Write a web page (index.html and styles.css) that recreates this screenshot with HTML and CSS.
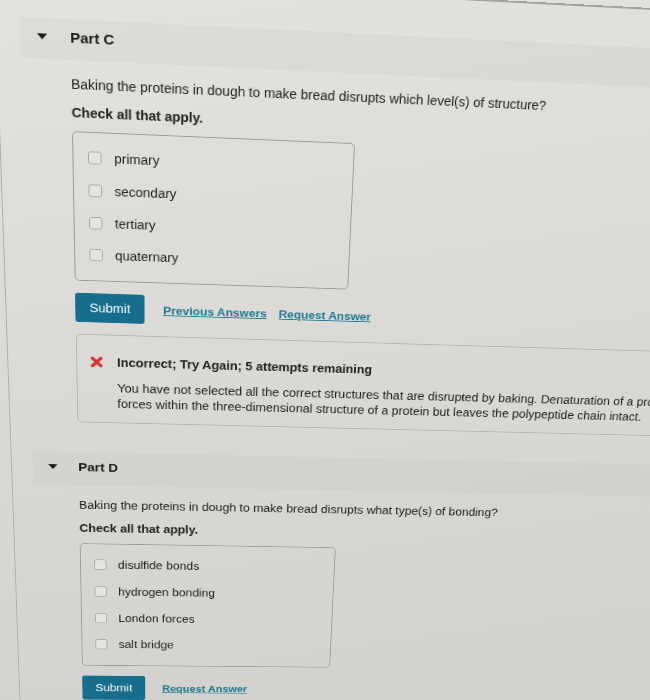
FILE: index.html
```html
<!DOCTYPE html>
<html lang="en">
<head>
<meta charset="utf-8">
<title>Part C – Part D</title>
<link rel="stylesheet" href="styles.css">
</head>
<body>
<div class="page">
  <div class="rule"></div>
  <div class="content">
    <section class="part">
      <div class="part-head"><span class="caret"></span><h2 class="part-title">Part C</h2></div>
      <div class="part-body">
        <p class="question">Baking the proteins in dough to make bread disrupts which level(s) of structure?</p>
        <p class="instruction">Check all that apply.</p>
        <div class="choices">
          <label class="choice"><input type="checkbox"><span>primary</span></label>
          <label class="choice"><input type="checkbox"><span>secondary</span></label>
          <label class="choice"><input type="checkbox"><span>tertiary</span></label>
          <label class="choice"><input type="checkbox"><span>quaternary</span></label>
        </div>
        <div class="actions">
          <button class="submit" type="button">Submit</button>
          <a class="link" href="#">Previous Answers</a>
          <a class="link" href="#">Request Answer</a>
        </div>
        <div class="feedback">
          <svg class="x-icon" viewBox="0 0 14 14" width="14" height="14" aria-hidden="true">
            <path d="M2.5 2.5 L11.5 11.5 M11.5 2.5 L2.5 11.5" stroke="#d0342c" stroke-width="3.6" stroke-linecap="round"/>
          </svg>
          <div class="feedback-title">Incorrect; Try Again; 5 attempts remaining</div>
          <p class="feedback-text">You have not selected all the correct structures that are disrupted by baking. Denaturation of a protein disrupts the forces within the three-dimensional structure of a protein but leaves the polypeptide chain intact.</p>
        </div>
      </div>
    </section>

    <section class="part part-d">
      <div class="part-head"><span class="caret"></span><h2 class="part-title">Part D</h2></div>
      <div class="part-body">
        <p class="question">Baking the proteins in dough to make bread disrupts what type(s) of bonding?</p>
        <p class="instruction">Check all that apply.</p>
        <div class="choices">
          <label class="choice"><input type="checkbox"><span>disulfide bonds</span></label>
          <label class="choice"><input type="checkbox"><span>hydrogen bonding</span></label>
          <label class="choice"><input type="checkbox"><span>London forces</span></label>
          <label class="choice"><input type="checkbox"><span>salt bridge</span></label>
        </div>
        <div class="actions">
          <button class="submit" type="button">Submit</button>
          <a class="link" href="#">Request Answer</a>
        </div>
      </div>
    </section>
  </div>
</div>
</body>
</html>
```

FILE: styles.css
```css
html {
  height: 100%;
  background: linear-gradient(172deg, #e3e2df 0%, #dbdad6 45%, #d2d1cd 100%);
}

body {
  margin: 0;
  height: 100%;
  overflow: hidden;
  font-family: "Liberation Sans", Arial, Helvetica, sans-serif;
  color: #1e1e1e;
}

/* the whole sheet is seen at an angle, so it is laid out flat and then projected */
.page {
  width: 900px;
  height: 1000px;
  transform-origin: 0 0;
  transform: matrix3d(1.019262, 0.051568, 0, 0.0000652497,
                      0.034325, 0.993887, 0, 0.000225919,
                      0, 0, 1, 0,
                      -12.5605, -28.5807, 0, 0.993222);
}

.rule {
  margin-top: 2px;
  height: 2px;
  background: #a3a29e;
}

.content {
  margin-left: 6px;
  border-left: 1px solid #aeada9;
  padding: 40px 0 0 23px;
  min-height: 960px;
}

.part-head {
  display: flex;
  align-items: center;
  padding: 10px 0 14px 17px;
  background: rgba(0, 0, 0, 0.022);
}

.caret {
  width: 0;
  height: 0;
  border-left: 5px solid transparent;
  border-right: 5px solid transparent;
  border-top: 6px solid #1a1a1a;
  margin-right: 23px;
}

.part-title {
  margin: 0;
  font-size: 15px;
  font-weight: bold;
  line-height: 18px;
  color: #1a1a1a;
}

.part-body {
  padding-left: 50px;
}

.question {
  margin: 15px 0 0;
  font-size: 14px;
  line-height: 20px;
}

.instruction {
  margin: 10px 0 0;
  font-size: 14px;
  font-weight: bold;
  line-height: 20px;
}

.choices {
  margin-top: 10px;
  width: 294px;
  box-sizing: border-box;
  border: 1px solid #9c9b98;
  border-radius: 5px;
  padding: 17px 15px 19px;
  display: flex;
  flex-direction: column;
  gap: 16px;
}

.choice {
  display: flex;
  align-items: center;
  gap: 13px;
  font-size: 14px;
  line-height: 20px;
}

.choice input {
  appearance: none;
  -webkit-appearance: none;
  margin: 0;
  width: 14px;
  height: 14px;
  box-sizing: border-box;
  border: 1px solid #a9a8a5;
  border-radius: 3px;
  background: #e5e4e1;
}

.actions {
  margin-top: 14px;
  display: flex;
  align-items: center;
}

.submit {
  width: 74px;
  height: 34px;
  padding: 0;
  border: 0;
  border-radius: 3px;
  background: #166e8c;
  color: #ffffff;
  font-family: "Liberation Sans", Arial, Helvetica, sans-serif;
  font-size: 14px;
}

.link {
  margin-left: 20px;
  font-size: 13px;
  font-weight: bold;
  color: #1b7893;
  text-decoration: underline;
}

.link + .link {
  margin-left: 13px;
}

.feedback {
  margin-top: 14px;
  width: 780px;
  box-sizing: border-box;
  border: 1px solid #b4b3b0;
  border-radius: 6px;
  padding: 22px 15px 14px 14px;
  display: grid;
  grid-template-columns: 14px 1fr;
  column-gap: 15px;
}

.x-icon {
  grid-column: 1;
  grid-row: 1;
  align-self: center;
}

.feedback-title {
  grid-column: 2;
  grid-row: 1;
  font-size: 14px;
  font-weight: bold;
  line-height: 20px;
}

.feedback-text {
  grid-column: 2;
  grid-row: 2;
  margin: 12px 0 0;
  font-size: 14px;
  line-height: 18.5px;
}

.part-d {
  margin-top: 37px;
}
```
